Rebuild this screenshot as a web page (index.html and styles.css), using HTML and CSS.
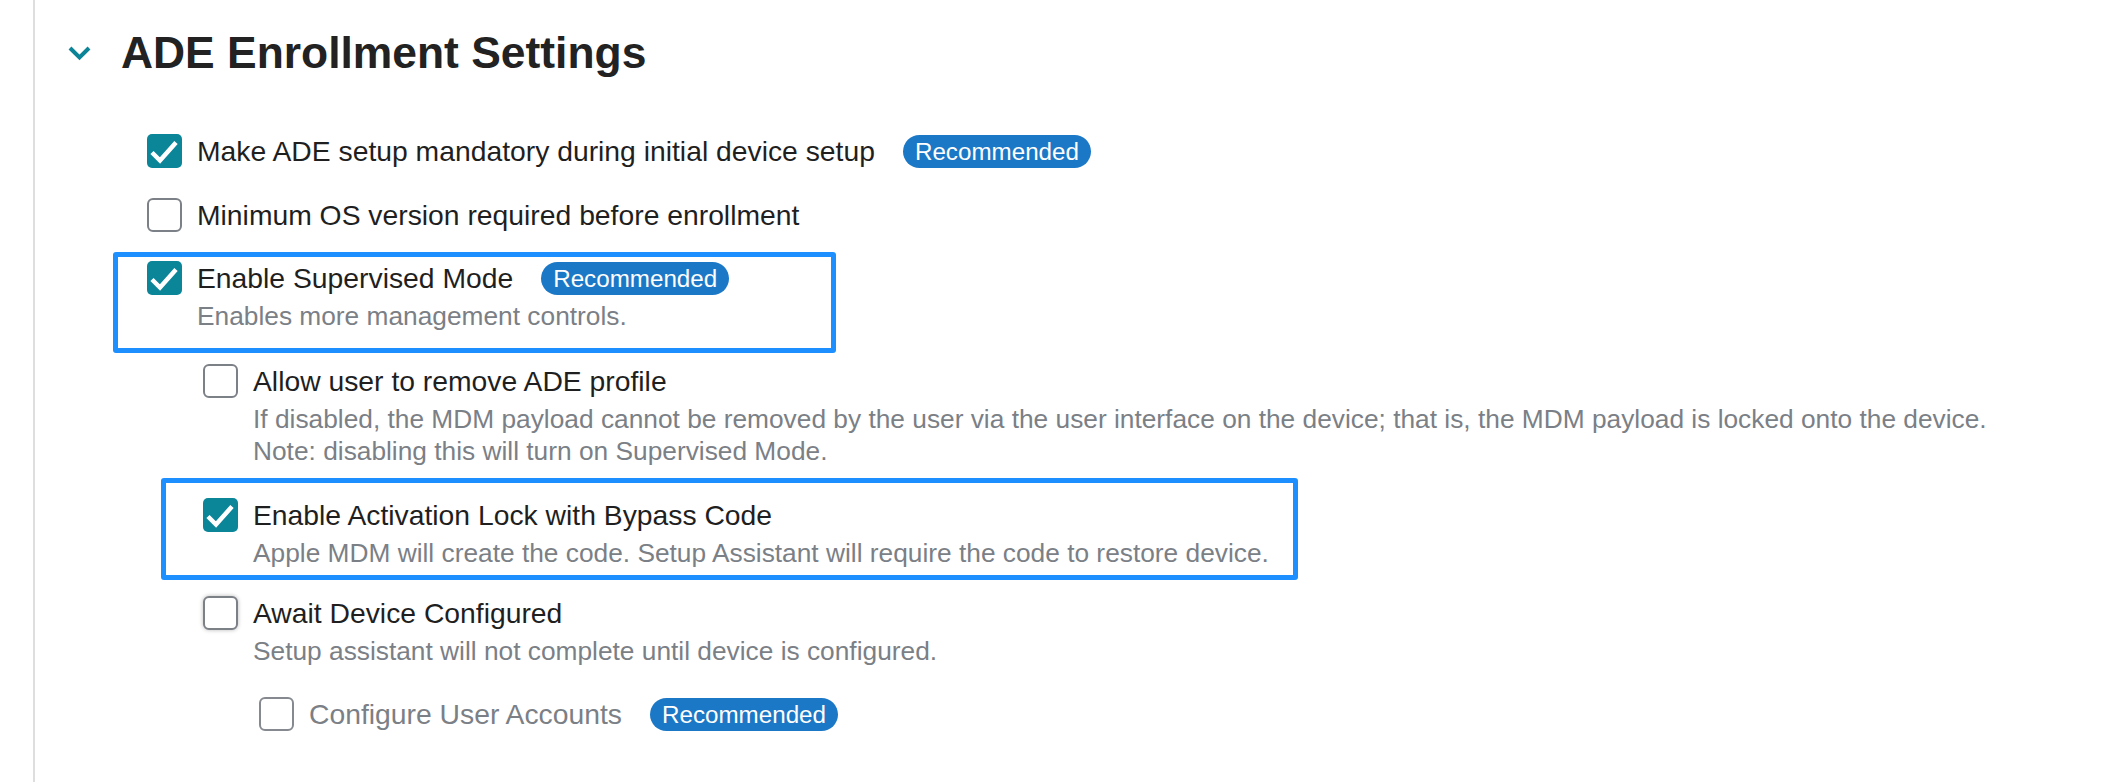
FILE: index.html
```html
<html lang="en">
<head>
    <meta charset="utf-8">
    <meta name="viewport" content="width=device-width, initial-scale=1">
    <title>ADE Enrollment Settings</title>
    <link rel="stylesheet" href="styles.css">
</head>

<body>
<main class="panel">
    <h1 class="panel-title">
        <svg class="chevron" viewBox="0 0 25 16"><polyline points="3,3 12.5,12.5 22,3"/></svg>
        ADE Enrollment Settings
    </h1>

    <div class="options">
        <div class="option">
            <span class="check on"><svg viewBox="0 0 35 34"><polyline points="5,18.5 13,26.5 29,8.5"/></svg></span>
            <div class="option-text">
                <div class="option-label">Make ADE setup mandatory during initial device setup <span class="badge">Recommended</span></div>
            </div>
        </div>

        <div class="option">
            <span class="check off"></span>
            <div class="option-text">
                <div class="option-label">Minimum OS version required before enrollment</div>
            </div>
        </div>

        <div class="highlight highlight-a">
            <div class="option">
                <span class="check on"><svg viewBox="0 0 35 34"><polyline points="5,18.5 13,26.5 29,8.5"/></svg></span>
                <div class="option-text">
                    <div class="option-label">Enable Supervised Mode <span class="badge">Recommended</span></div>
                    <div class="option-desc">Enables more management controls.</div>
                </div>
            </div>
        </div>

        <div class="option level-1">
            <span class="check off"></span>
            <div class="option-text">
                <div class="option-label">Allow user to remove ADE profile</div>
                <div class="option-desc">If disabled, the MDM payload cannot be removed by the user via the user interface on the device; that is, the MDM payload is locked onto the device.<br>Note: disabling this will turn on Supervised Mode.</div>
            </div>
        </div>

        <div class="highlight highlight-b">
            <div class="option">
                <span class="check on"><svg viewBox="0 0 35 34"><polyline points="5,18.5 13,26.5 29,8.5"/></svg></span>
                <div class="option-text">
                    <div class="option-label">Enable Activation Lock with Bypass Code</div>
                    <div class="option-desc">Apple MDM will create the code. Setup Assistant will require the code to restore device.</div>
                </div>
            </div>
        </div>

        <div class="option level-1">
            <span class="check off focused"></span>
            <div class="option-text">
                <div class="option-label">Await Device Configured</div>
                <div class="option-desc">Setup assistant will not complete until device is configured.</div>
            </div>
        </div>

        <div class="option level-2 disabled">
            <span class="check off"></span>
            <div class="option-text">
                <div class="option-label">Configure User Accounts <span class="badge">Recommended</span></div>
            </div>
        </div>
    </div>
</main>
</body>
</html>
```

FILE: styles.css
```css
* {
    margin: 0;
    padding: 0;
    box-sizing: border-box;
}

body {
    background: #fff;
    color: #1f1f1f;
    font: normal 28px "Liberation Sans", Arial, sans-serif;
}

.panel {
    margin-left: 33px;
    min-height: 100vh;
    padding-top: 27px;
    border-left: 2px solid #dedede;
}

.panel-title {
    display: flex;
    align-items: center;
    gap: 29px;
    padding-left: 32px;
    font-size: 44.4px;
    line-height: 52px;
    font-weight: 700;
    color: #222;
}

.chevron {
    width: 25px;
    height: 16px;
    fill: none;
    stroke: #0b8497;
    stroke-width: 4;
}

.options {
    display: flex;
    flex-direction: column;
    gap: 30px;
    margin: 55px 0 0 112px;
}

.option {
    display: flex;
    align-items: flex-start;
    gap: 15px;
}

.level-1 {
    margin-left: 56px;
}

.level-2 {
    margin-left: 112px;
}

.check {
    flex: none;
    display: block;
    width: 35px;
    height: 34px;
    border-radius: 5px;
}

.check svg {
    display: block;
    width: 35px;
    height: 34px;
    fill: none;
    stroke: #fff;
    stroke-width: 4.5;
}

.check.on {
    background: #0b8598;
}

.check.off {
    background: #fff;
    border: 2px solid #7c8087;
    border-radius: 6px;
}

.check.focused {
    box-shadow: 0 0 4px rgba(0, 0, 0, .28);
}

.option-label {
    display: flex;
    align-items: center;
    gap: 28px;
    height: 34px;
    font-size: 28.3px;
    white-space: nowrap;
}

.option-desc {
    margin-top: 5px;
    font-size: 26.3px;
    line-height: 32px;
    color: #7b7f86;
    white-space: nowrap;
}

.disabled .option-label {
    color: #7b7f86;
}

.disabled .check.off {
    border-color: #868a90;
}

.badge {
    display: inline-block;
    padding: 0 12px;
    font-size: 24.2px;
    line-height: 33px;
    border-radius: 17px;
    background: #1b78c6;
    color: #fff;
}

.highlight {
    border: 5px solid #1e8fff;
    border-radius: 3px;
}

.highlight-a {
    width: 723px;
    margin: -10px 0 -19px -34px;
    padding: 4px 0 16px 29px;
}

.highlight-b {
    width: 1137px;
    margin: -19px 0 -14px 14px;
    padding: 15px 0 6px 37px;
}
```
